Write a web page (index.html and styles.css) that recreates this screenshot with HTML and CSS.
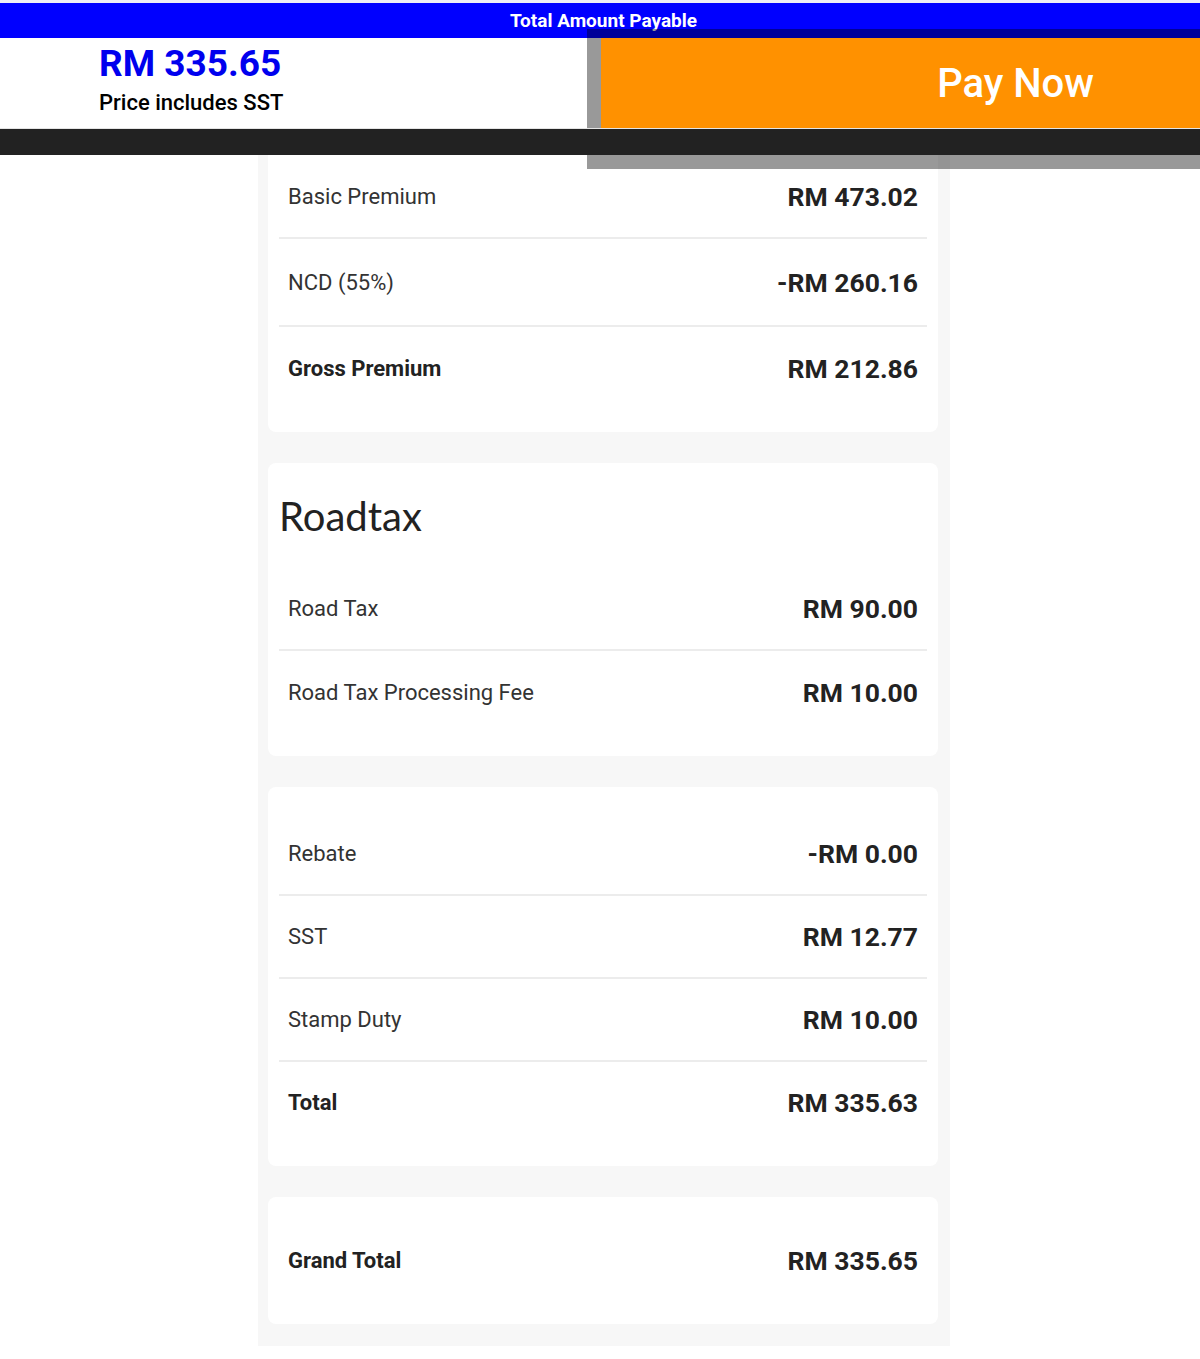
FILE: index.html
```html
<!DOCTYPE html>
<html lang="en">
<head>
    <meta charset="UTF-8">
    <meta name="viewport" content="width=device-width, initial-scale=1.0">
    <title>Payment Summary</title>
    <link rel="stylesheet" href="styles.css">
</head>
<body>
    <div class="header">
        <div class="header-title">Total Amount Payable</div>
        <div class="header-main">
            <div class="header-price">
                <div class="price">RM 335.65</div>
                <div class="price-note">Price includes SST</div>
            </div>
            <button class="pay-button">Pay Now</button>
        </div>
        <div class="header-bar"></div>
    </div>

    <div class="page">
        <div class="summary">
            <div class="card card-first">
                <div class="row">
                    <span class="label">Basic Premium</span>
                    <span class="value">RM 473.02</span>
                </div>
                <div class="row row-tall">
                    <span class="label">NCD (55%)</span>
                    <span class="value">-RM 260.16</span>
                </div>
                <div class="row">
                    <span class="label label-strong">Gross Premium</span>
                    <span class="value">RM 212.86</span>
                </div>
            </div>

            <div class="card">
                <h2 class="card-title">Roadtax</h2>
                <div class="row">
                    <span class="label">Road Tax</span>
                    <span class="value">RM 90.00</span>
                </div>
                <div class="row">
                    <span class="label">Road Tax Processing Fee</span>
                    <span class="value">RM 10.00</span>
                </div>
            </div>

            <div class="card card-spaced">
                <div class="row">
                    <span class="label">Rebate</span>
                    <span class="value">-RM 0.00</span>
                </div>
                <div class="row">
                    <span class="label">SST</span>
                    <span class="value">RM 12.77</span>
                </div>
                <div class="row">
                    <span class="label">Stamp Duty</span>
                    <span class="value">RM 10.00</span>
                </div>
                <div class="row">
                    <span class="label label-strong">Total</span>
                    <span class="value">RM 335.63</span>
                </div>
            </div>

            <div class="card">
                <div class="row">
                    <span class="label label-strong">Grand Total</span>
                    <span class="value">RM 335.65</span>
                </div>
            </div>
        </div>
    </div>
</body>
</html>
```

FILE: styles.css
```css
body {
    margin: 0;
    font-family: Roboto, "Liberation Sans", Arial, sans-serif;
    background-color: #fff;
}
.header {
    border-top: 3px solid #eeeef6;
}
.header-title {
    background-color: #0000ff;
    color: #fff;
    font-size: 19px;
    font-weight: bold;
    height: 35px;
    line-height: 35px;
    text-align: center;
    padding-left: 7px;
}
.header-main {
    display: flex;
    height: 90px;
    background-color: #fff;
}
.header-price {
    width: 601px;
    box-sizing: border-box;
    padding: 5px 0 0 99px;
}
.price {
    color: #0000ee;
    font-size: 37px;
    font-weight: bold;
    line-height: 42px;
}
.price-note {
    color: #000;
    font-size: 22px;
    font-weight: 500;
    line-height: 26px;
    margin-top: 5px;
}
.pay-button {
    flex: 1;
    position: relative;
    z-index: 1;
    border: none;
    background-color: #ff9100;
    color: #fff;
    font-family: Roboto, "Liberation Sans", Arial, sans-serif;
    font-size: 40px;
    font-weight: 500;
    text-align: right;
    padding: 0 106px 0 0;
    box-shadow: 11px 16px 0 25px rgba(0, 0, 0, 0.4);
}
.header-bar {
    position: relative;
    z-index: 2;
    height: 26px;
    background-color: #222;
    border-top: 1px solid #e4e4e4;
}
.page {
    padding-left: 8px;
}
.summary {
    width: 692px;
    box-sizing: border-box;
    margin: 0 auto;
    padding: 0 12px 22px 10px;
    background-color: #f7f7f7;
    display: flex;
    flex-direction: column;
    gap: 31px;
}
.card {
    background-color: #fff;
    border-radius: 8px;
    padding: 22px 11px 23px;
}
.card-first {
    padding-top: 0;
    border-radius: 0 0 8px 8px;
}
.card-spaced {
    padding-top: 26px;
}
.card-title {
    margin: 0 0 20px;
    font-family: Lato, "Open Sans", sans-serif;
    font-size: 40px;
    font-weight: normal;
    line-height: 62px;
    color: #222;
}
.row {
    display: flex;
    justify-content: space-between;
    align-items: center;
    min-height: 82px;
    padding: 0 9px;
    border-bottom: 2px solid #ececec;
}
.row:last-child {
    border-bottom: none;
}
.row-tall {
    min-height: 86px;
}
.card-spaced .row {
    min-height: 81px;
}
.label {
    font-size: 22px;
    color: #333;
}
.label-strong {
    font-weight: bold;
    color: #222;
}
.value {
    font-size: 26.5px;
    font-weight: bold;
    color: #222;
}
```
